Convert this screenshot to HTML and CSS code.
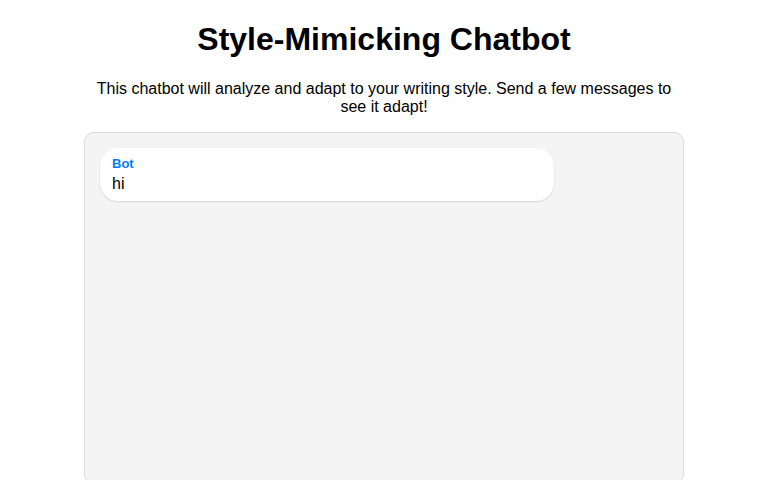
FILE: index.html
```html
<!DOCTYPE html>
<html>
<head>
<meta charset="utf-8">
<link rel="stylesheet" href="styles.css">
</head>
<body>
<div class="page">
  <h1 class="title">Style-Mimicking Chatbot</h1>
  <p class="intro">This chatbot will analyze and adapt to your writing style. Send a few messages to see it adapt!</p>
  <div class="chat">
    <div class="msg bot">
      <div class="sender">Bot</div>
      <div class="text">hi</div>
    </div>
  </div>
</div>
</body>
</html>
```
FILE: styles.css
```css
body {
  margin: 0;
  padding: 0 8px;
  font-family: "Liberation Sans", Arial, sans-serif;
  color: #000;
  background: #fff;
}
.page {
  max-width: 600px;
  margin: 0 auto;
}
.title {
  font-size: 32px;
  font-weight: bold;
  text-align: center;
  margin: 21.44px 0;
}
.intro {
  font-size: 16px;
  text-align: center;
  margin: 16px 0;
}
.chat {
  height: 320px;
  padding: 15px;
  background: #f4f4f4;
  border: 1px solid #ddd;
  border-radius: 10px;
  display: flex;
  flex-direction: column;
  align-items: flex-start;
}
.msg {
  max-width: 80%;
  width: 80%;
  box-sizing: border-box;
  padding: 8px 12px;
  background: #fff;
  border-radius: 18px;
  box-shadow: 0 1px 2px rgba(0,0,0,0.12);
}
.sender {
  font-size: 13px;
  font-weight: bold;
  color: #007bff;
  margin-bottom: 4px;
}
.text {
  font-size: 16px;
}
```
